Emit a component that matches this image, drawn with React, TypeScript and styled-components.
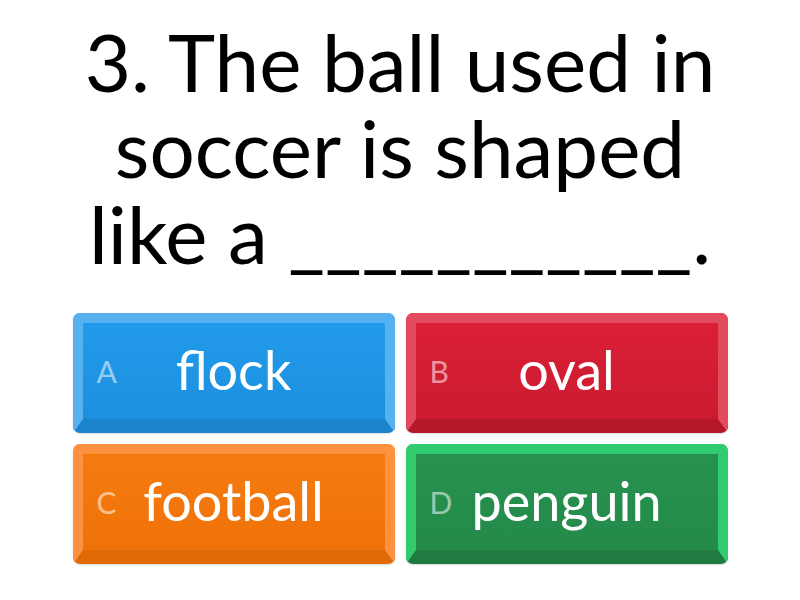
import styled, { createGlobalStyle } from "styled-components";

const GlobalStyle = createGlobalStyle`
  html, body {
    margin: 0;
    padding: 0;
    background: #ffffff;
  }
  body {
    font-family: "Lato", "Open Sans", sans-serif;
  }
`;

interface Palette {
  edge: string;
  face: string;
  faceLow: string;
  bottom: string;
}

const colors: Record<string, Palette> = {
  A: { edge: "#57b1f1", face: "#229aea", faceLow: "#1c90df", bottom: "#1a84cd" },
  B: { edge: "#e24a5d", face: "#da1f36", faceLow: "#cc1b30", bottom: "#b5182b" },
  C: { edge: "#fc9240", face: "#f57b10", faceLow: "#ef7209", bottom: "#e06a05" },
  D: { edge: "#30cc6f", face: "#279250", faceLow: "#248a4a", bottom: "#1f7b40" },
};

const Page = styled.div`
  width: 800px;
  height: 600px;
  display: flex;
  flex-direction: column;
  align-items: center;
  box-sizing: border-box;
  padding-top: 18px;
`;

const Question = styled.h1`
  margin: 0;
  width: 680px;
  text-align: center;
  font-size: 80px;
  font-weight: 400;
  line-height: 86px;
  color: #000;
`;

const Answers = styled.div`
  margin-top: 37px;
  display: grid;
  grid-template-columns: repeat(2, 322px);
  grid-auto-rows: 120px;
  gap: 11px;
`;

const AnswerButton = styled.div<{ $p: Palette }>`
  position: relative;
  box-sizing: border-box;
  border-radius: 7px;
  border: 10px solid ${(p) => p.$p.edge};
  border-bottom: 14px solid ${(p) => p.$p.bottom};
  background: linear-gradient(${(p) => p.$p.face}, ${(p) => p.$p.faceLow});
  box-shadow: 0 1px 2px rgba(0, 0, 0, 0.15);
  display: flex;
  align-items: center;
  justify-content: center;
  color: #fff;
`;

const Letter = styled.span`
  position: absolute;
  left: 14px;
  top: 50%;
  transform: translateY(-50%);
  font-size: 30px;
  color: rgba(255, 255, 255, 0.55);
`;

const Label = styled.span`
  font-size: 54px;
  line-height: 1;
  margin-top: -2px;
`;

const answers = [
  { key: "A", text: "flock" },
  { key: "B", text: "oval" },
  { key: "C", text: "football" },
  { key: "D", text: "penguin" },
];

export default function App() {
  return (
    <Page>
      <GlobalStyle />
      <Question>
        3. The ball used in soccer is shaped like a ___________.
      </Question>
      <Answers>
        {answers.map((a) => (
          <AnswerButton key={a.key} $p={colors[a.key]}>
            <Letter>{a.key}</Letter>
            <Label>{a.text}</Label>
          </AnswerButton>
        ))}
      </Answers>
    </Page>
  );
}
